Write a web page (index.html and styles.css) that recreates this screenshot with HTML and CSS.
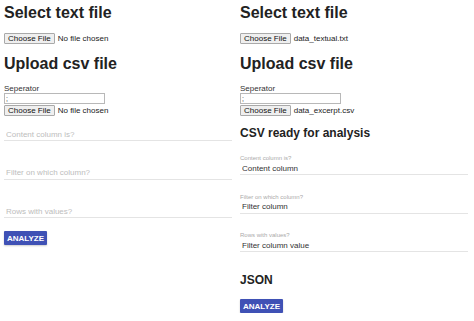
FILE: index.html
```html
<!DOCTYPE html>
<html lang="en">
<head>
    <meta charset="UTF-8">
    <meta name="viewport" content="width=device-width, initial-scale=1.0">
    <title>CSV Analyzer</title>
    <link rel="stylesheet" href="styles.css">
</head>
<body>

<div class="panel">
    <h1>Select text file</h1>
    <div class="file-row">
        <button class="file-btn">Choose File</button>
        <span class="file-name">No file chosen</span>
    </div>

    <h1>Upload csv file</h1>
    <label class="sep-label">Seperator</label>
    <input type="text" class="sep-input" value=";">
    <div class="file-row tight">
        <button class="file-btn">Choose File</button>
        <span class="file-name">No file chosen</span>
    </div>

    <div class="fields empty">
        <div class="field">
            <label></label>
            <input type="text" placeholder="Content column is?">
        </div>
        <div class="field">
            <label></label>
            <input type="text" placeholder="Filter on which column?">
        </div>
        <div class="field">
            <label></label>
            <input type="text" placeholder="Rows with values?">
        </div>
    </div>

    <button class="analyze">ANALYZE</button>
</div>

<div class="panel">
    <h1>Select text file</h1>
    <div class="file-row">
        <button class="file-btn">Choose File</button>
        <span class="file-name">data_textual.txt</span>
    </div>

    <h1>Upload csv file</h1>
    <label class="sep-label">Seperator</label>
    <input type="text" class="sep-input" value=";">
    <div class="file-row tight">
        <button class="file-btn">Choose File</button>
        <span class="file-name">data_excerpt.csv</span>
    </div>

    <h2>CSV ready for analysis</h2>
    <div class="fields">
        <div class="field">
            <label>Content column is?</label>
            <input type="text" value="Content column">
        </div>
        <div class="field">
            <label>Filter on which column?</label>
            <input type="text" value="Filter column">
        </div>
        <div class="field">
            <label>Rows with values?</label>
            <input type="text" value="Filter column value">
        </div>
    </div>

    <h2 class="json">JSON</h2>
    <button class="analyze">ANALYZE</button>
</div>

</body>
</html>
```

FILE: styles.css
```css
body {
    font-family: 'Liberation Sans', Arial, sans-serif;
    margin: 0;
    display: flex;
    background-color: #fff;
    color: #222;
}

.panel {
    width: 228px;
    padding: 0 4px;
    display: flex;
    flex-direction: column;
    align-items: flex-start;
}

h1 {
    font-size: 16px;
    line-height: 20px;
    font-weight: bold;
    margin: 10px 0 0;
}

.panel h1:first-child {
    margin-top: 3px;
}

h2 {
    font-size: 12px;
    line-height: 15px;
    font-weight: bold;
    margin: 10px 0 0;
}

.file-row {
    display: flex;
    align-items: center;
    gap: 3px;
    margin-top: 10px;
}

.file-row.tight {
    margin-top: 1px;
}

.file-btn {
    font-family: inherit;
    font-size: 8px;
    line-height: 9px;
    height: 11px;
    padding: 0 3px;
    color: #111;
    background-color: #efefef;
    border: 1px solid #a9a9a9;
    border-radius: 1px;
}

.file-name {
    font-size: 8px;
    line-height: 11px;
    color: #222;
}

.sep-label {
    font-size: 8px;
    line-height: 9px;
    margin-top: 10px;
    color: #333;
}

.sep-input {
    box-sizing: border-box;
    width: 101px;
    height: 11px;
    margin: 0;
    padding: 0 1px;
    font-family: inherit;
    font-size: 7px;
    line-height: 9px;
    border: 1px solid #b8b8b8;
    color: #333;
}

.fields {
    align-self: stretch;
    display: flex;
    flex-direction: column;
    gap: 17.5px;
    margin-top: 13px;
}

.fields.empty {
    margin-top: 4px;
}

.field label {
    display: block;
    height: 8px;
    font-size: 6px;
    line-height: 8px;
    color: #aaa;
}

.field input {
    display: block;
    box-sizing: border-box;
    width: 100%;
    height: 13px;
    margin: 0;
    padding: 0 2px;
    border: none;
    border-bottom: 1px solid #e4e4e4;
    font-family: inherit;
    font-size: 8px;
    line-height: 12px;
    color: #333;
    background: transparent;
}

.field input::placeholder {
    color: #bdbdbd;
}

.analyze {
    margin-top: 13px;
    height: 14px;
    padding: 0 3px;
    font-family: inherit;
    font-size: 8px;
    font-weight: bold;
    color: #fff;
    background-color: #3f51b5;
    border: none;
    border-radius: 1px;
    box-shadow: 0 1px 2px rgba(0, 0, 0, 0.2);
}

h2.json {
    margin-top: 21px;
}

.json + .analyze {
    margin-top: 11px;
}
```
